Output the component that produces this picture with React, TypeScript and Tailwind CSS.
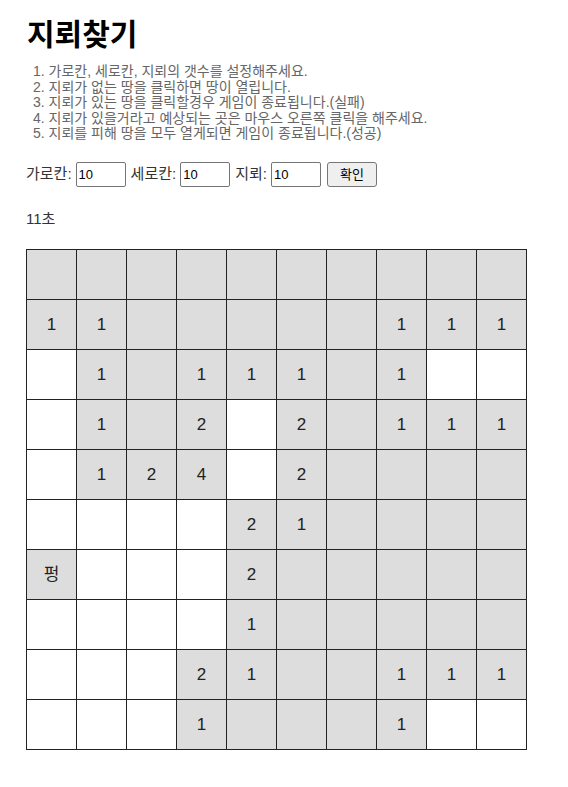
import React from "react";

type Cell = { v: string; g: boolean };

// G = gray (#ddd), W = white; value after the letter
const rows: string[] = [
  "G G G G G G G G G G",
  "G1 G1 G G G G G G1 G1 G1",
  "W G1 G G1 G1 G1 G G1 W W",
  "W G1 G G2 W G2 G G1 G1 G1",
  "W G1 G2 G4 W G2 G G G G",
  "W W W W G2 G1 G G G G",
  "G펑 W W W G2 G G G G G",
  "W W W W G1 G G G G G",
  "W W W G2 G1 G G G1 G1 G1",
  "W W W G1 G G G G1 W W",
];

const board: Cell[][] = rows.map((r) =>
  r.split(" ").map((s) => ({ g: s[0] === "G", v: s.slice(1) }))
);

const font = "font-['Liberation_Sans','Noto_Sans_CJK_KR',sans-serif]";

export default function App() {
  return (
    <div className={`${font} min-h-screen bg-white px-[26px] pt-[16px] pb-10 text-[#222]`}>
      <h1 className="pl-[1px] text-[30px] font-bold leading-[37px] text-black">지뢰찾기</h1>

      <ol className="mt-[11px] list-inside list-decimal pl-[7px] text-[14px] leading-[15.6px] text-[#666]">
        <li>가로칸, 세로칸, 지뢰의 갯수를 설정해주세요.</li>
        <li>지뢰가 없는 땅을 클릭하면 땅이 열립니다.</li>
        <li>지뢰가 있는 땅을 클릭할경우 게임이 종료됩니다.(실패)</li>
        <li>지뢰가 있을거라고 예상되는 곳은 마우스 오른쪽 클릭을 해주세요.</li>
        <li>지뢰를 피해 땅을 모두 열게되면 게임이 종료됩니다.(성공)</li>
      </ol>

      <div className="mt-[20px] flex h-[25px] items-center text-[15px] text-[#333]">
        <span>가로칸:</span>
        <input
          defaultValue="10"
          className="ml-[4px] h-[25px] w-[50px] rounded-[2px] border border-[#767676] px-[2px] text-[13px] text-black"
        />
        <span className="ml-[5px]">세로칸:</span>
        <input
          defaultValue="10"
          className="ml-[4px] h-[25px] w-[50px] rounded-[2px] border border-[#767676] px-[2px] text-[13px] text-black"
        />
        <span className="ml-[5px]">지뢰:</span>
        <input
          defaultValue="10"
          className="ml-[4px] h-[25px] w-[50px] rounded-[2px] border border-[#767676] px-[2px] text-[13px] text-black"
        />
        <button className="ml-[6px] h-[25px] w-[50px] rounded-[3px] border border-[#767676] bg-[#efefef] text-[13px] font-normal text-black">
          확인
        </button>
      </div>

      <div className="mt-[22px] text-[15px] leading-[20px] text-[#333]">11초</div>

      <div className="mt-[20px] grid w-[501px] grid-cols-[repeat(10,50px)] border-l border-t border-[#222]">
        {board.flat().map((c, i) => (
          <div
            key={i}
            className={`flex h-[50px] items-center justify-center border-b border-r border-[#222] text-[17px] text-[#222] ${
              c.g ? "bg-[#dddddd]" : "bg-white"
            }`}
          >
            {c.v}
          </div>
        ))}
      </div>
    </div>
  );
}
